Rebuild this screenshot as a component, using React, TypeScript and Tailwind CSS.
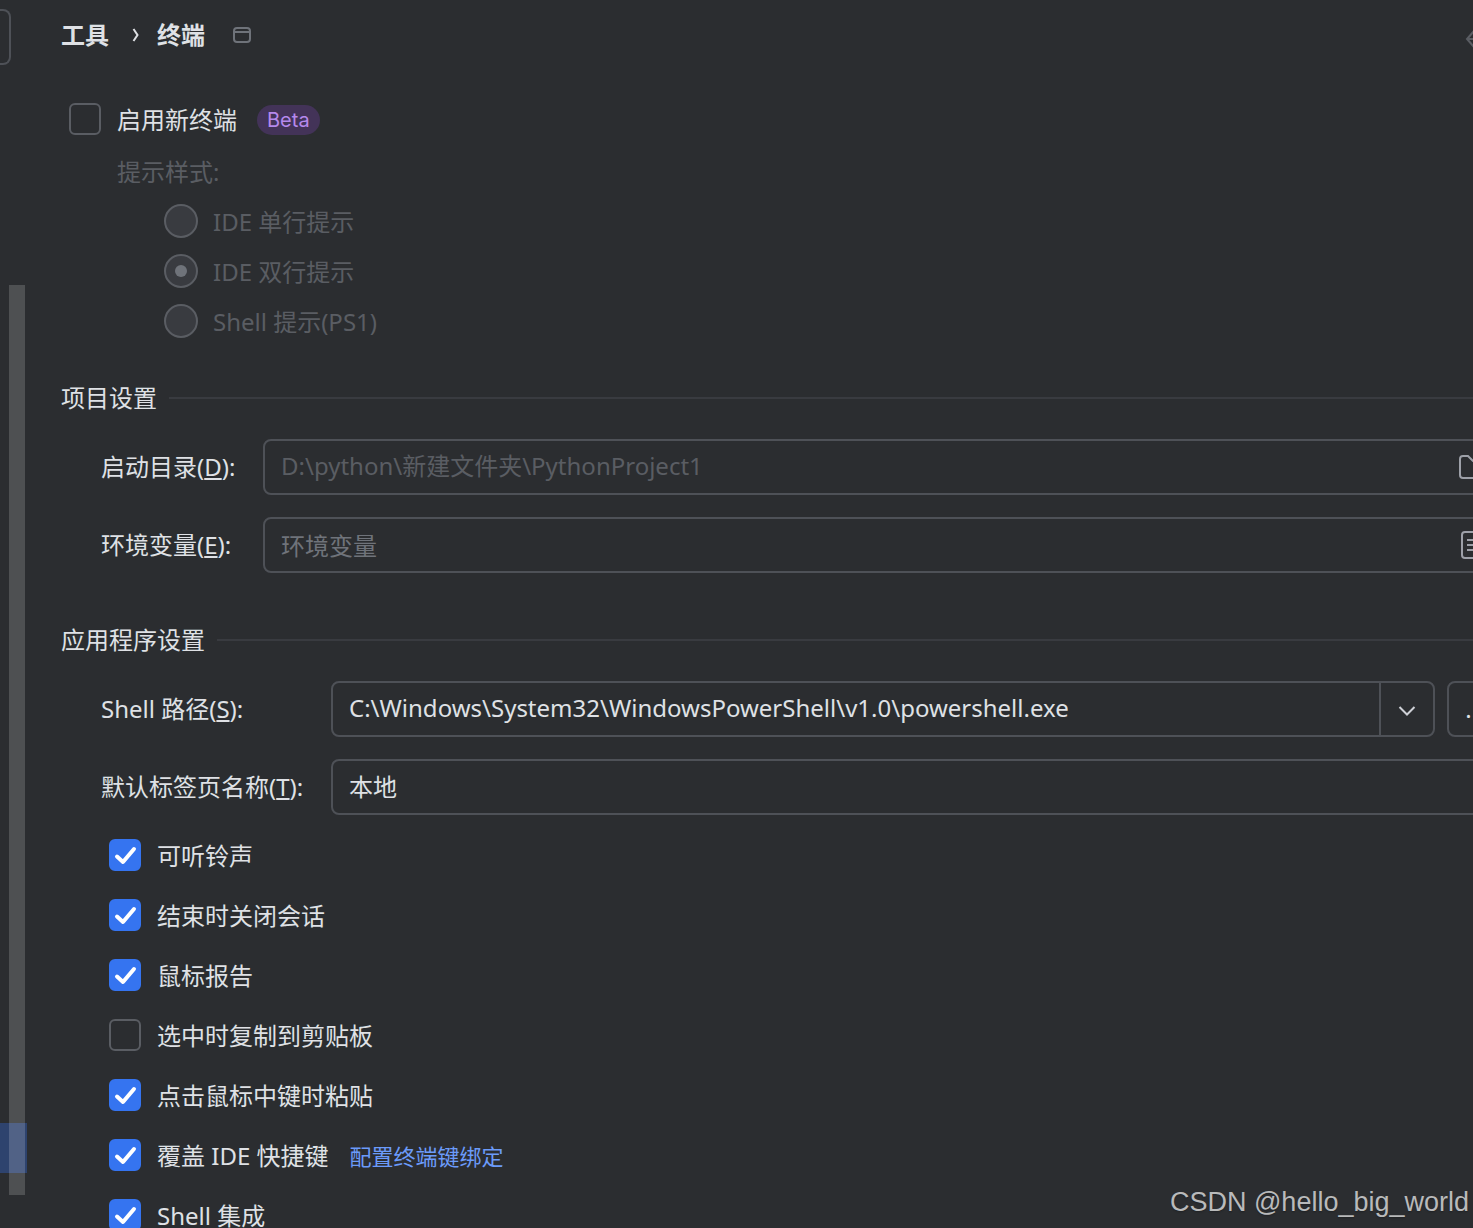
import { useState, type ReactNode } from 'react';

const uiFont = "font-['Noto_Sans','Noto_Sans_CJK_SC',sans-serif]";

function Checkbox({ id, label, defaultChecked = false }: { id: string; label: string; defaultChecked?: boolean }) {
  return (
    <div className="flex items-center gap-4">
      <span className="grid size-8 shrink-0">
        <input
          id={id}
          type="checkbox"
          defaultChecked={defaultChecked}
          className="peer size-8 appearance-none rounded-md border-2 border-[#5a5d63] [grid-area:1/1] checked:border-[#3574f0] checked:bg-[#3574f0]"
        />
        <svg
          viewBox="0 0 32 32"
          fill="none"
          stroke="#fff"
          strokeWidth="4"
          strokeLinecap="round"
          strokeLinejoin="round"
          className="pointer-events-none invisible size-8 [grid-area:1/1] peer-checked:visible"
        >
          <path d="M8 17.5 L14 23 L25 10" />
        </svg>
      </span>
      <label htmlFor={id} className="pt-0.5 whitespace-nowrap">
        {label}
      </label>
    </div>
  );
}

function Radio({ id, label, defaultChecked = false }: { id: string; label: string; defaultChecked?: boolean }) {
  return (
    <div className="flex h-[50px] items-center gap-[15px]">
      <span className="grid size-[34px] shrink-0 place-items-center">
        <input
          id={id}
          type="radio"
          name="prompt-style"
          defaultChecked={defaultChecked}
          disabled
          className="peer size-[34px] appearance-none rounded-full border-2 border-[#5a5d63] bg-[#393b40] [grid-area:1/1]"
        />
        <span className="pointer-events-none invisible size-3 rounded-full bg-[#6f737a] [grid-area:1/1] peer-checked:visible" />
      </span>
      <label htmlFor={id} className="pt-0.5">
        {label}
      </label>
    </div>
  );
}

function SectionTitle({ children }: { children: ReactNode }) {
  return (
    <div className="flex h-8 items-center gap-3">
      <h2>{children}</h2>
      <div className="h-0.5 flex-1 bg-[#393b40]" />
    </div>
  );
}

function FieldLabel({ htmlFor, text, mnemonic }: { htmlFor: string; text: string; mnemonic: string }) {
  return (
    <label htmlFor={htmlFor} className="whitespace-nowrap">
      {text}(<span className="underline decoration-2 underline-offset-2">{mnemonic}</span>):
    </label>
  );
}

const fieldBox = 'flex h-14 items-center rounded-lg border-2 border-[#4e5157]';
const fieldInput = 'h-full min-w-0 flex-1 bg-transparent px-4 outline-none';

const options = [
  { id: 'bell', label: '可听铃声', checked: true },
  { id: 'close', label: '结束时关闭会话', checked: true },
  { id: 'mouse', label: '鼠标报告', checked: true },
  { id: 'copy', label: '选中时复制到剪贴板', checked: false },
  { id: 'paste', label: '点击鼠标中键时粘贴', checked: true },
  { id: 'override', label: '覆盖 IDE 快捷键', checked: true, link: '配置终端键绑定' },
  { id: 'integration', label: 'Shell 集成', checked: true },
];

export default function App() {
  const [shell, setShell] = useState('C:\\Windows\\System32\\WindowsPowerShell\\v1.0\\powershell.exe');

  return (
    <div className={`relative flex h-screen overflow-hidden bg-[#2b2d30] text-2xl text-[#dfe1e5] ${uiFont}`}>
      <aside className="relative w-7 shrink-0">
        <div className="mt-[9px] h-14 w-[11px] rounded-r-lg border-2 border-l-0 border-[#4e5157]" />
        <div className="absolute top-[1123px] left-0 h-[50px] w-[27px] bg-[#2e436e]" />
        <div className="absolute top-[285px] left-[9px] h-[910px] w-4 bg-white/17" />
      </aside>

      <main className="min-w-0 flex-1 pl-[33px]">
        <div className="-mr-[30px] flex flex-col">
          <header className="flex h-[70px] items-center">
            <nav className="flex items-center font-bold">
              <span>工具</span>
              <svg viewBox="0 0 48 32" fill="none" stroke="#dfe1e5" strokeWidth="2" className="h-8 w-12">
                <path d="M24.5 10 L28.5 16 L24.5 22" />
              </svg>
              <h1>终端</h1>
            </nav>
            <svg viewBox="0 0 20 20" fill="none" stroke="#6f737a" strokeWidth="2" className="ml-[27px] size-5">
              <rect x="2" y="3" width="16" height="14" rx="3" />
              <path d="M2 7 H18" />
            </svg>
            <button type="button" aria-label="后退" className="mt-2 mr-1.5 ml-auto">
              <svg viewBox="0 0 32 32" fill="none" stroke="#5a5d63" strokeWidth="2" className="size-8">
                <path d="M9 8 L2 16 L9 24 M2 16 H28" />
              </svg>
            </button>
          </header>

          <section className="mt-8">
            <div className="flex items-center gap-5 pl-2">
              <Checkbox id="new-terminal" label="启用新终端" />
              <span className="mt-0.5 rounded-full bg-[#433358] px-2.5 font-['Inter',sans-serif] text-xl leading-[30px] text-[#b589ec]">
                Beta
              </span>
            </div>
            <fieldset className="pl-14 text-[#5a5d63]">
              <legend className="h-14 pt-5">提示样式:</legend>
              <div className="mt-1 pl-[47px]">
                <Radio id="single" label="IDE 单行提示" />
                <Radio id="double" label="IDE 双行提示" defaultChecked />
                <Radio id="ps1" label="Shell 提示(PS1)" />
              </div>
            </fieldset>
          </section>

          <section className="mt-9">
            <SectionTitle>项目设置</SectionTitle>
            <div className="mt-[25px] grid grid-cols-[162px_1fr] items-center gap-y-[22px] pl-10">
              <FieldLabel htmlFor="dir" text="启动目录" mnemonic="D" />
              <div className={fieldBox}>
                <input
                  id="dir"
                  placeholder="D:\python\新建文件夹\PythonProject1"
                  className={`${fieldInput} pb-1 placeholder:text-[#5a5d63]`}
                />
                <button type="button" aria-label="浏览" className="mr-[11px]">
                  <svg viewBox="0 0 32 32" fill="none" stroke="#9da0a8" strokeWidth="2" className="size-8">
                    <path d="M5 5 H10 L15 10 H27 Q29 10 29 12 V24 Q29 27 26 27 H5 Q2 27 2 24 V8 Q2 5 5 5 Z" />
                  </svg>
                </button>
              </div>
              <FieldLabel htmlFor="env" text="环境变量" mnemonic="E" />
              <div className={fieldBox}>
                <input id="env" placeholder="环境变量" className={`${fieldInput} placeholder:text-[#6f737a]`} />
                <button type="button" aria-label="编辑环境变量" className="mr-[11px]">
                  <svg viewBox="0 0 32 32" fill="none" stroke="#9da0a8" strokeWidth="2" className="size-8">
                    <rect x="4" y="3" width="24" height="26" rx="3" />
                    <path d="M9 11 H23 M9 16 H23 M9 21 H23" />
                  </svg>
                </button>
              </div>
            </div>
          </section>

          <section className="mt-[51px]">
            <SectionTitle>应用程序设置</SectionTitle>
            <div className="mt-[25px] grid grid-cols-[230px_1fr] items-center gap-y-[22px] pl-10">
              <FieldLabel htmlFor="shell" text="Shell 路径" mnemonic="S" />
              <div className="flex gap-3">
                <div className={`${fieldBox} min-w-0 flex-1`}>
                  <input
                    id="shell"
                    value={shell}
                    onChange={(e) => setShell(e.target.value)}
                    className={`${fieldInput} pb-1`}
                  />
                  <button
                    type="button"
                    aria-label="显示路径列表"
                    className="flex h-full w-[54px] items-center justify-center border-l-2 border-[#4e5157]"
                  >
                    <svg viewBox="0 0 20 20" fill="none" stroke="#ced0d6" strokeWidth="2" className="size-5">
                      <path d="M2.5 8 L10 15.5 L17.5 8" />
                    </svg>
                  </button>
                </div>
                <button type="button" className="h-14 w-14 rounded-lg border-2 border-[#4e5157]">
                  ...
                </button>
              </div>
              <FieldLabel htmlFor="tab" text="默认标签页名称" mnemonic="T" />
              <div className={fieldBox}>
                <input id="tab" defaultValue="本地" className={`${fieldInput} pb-1`} />
              </div>
            </div>
            <ul className="mt-2.5 pl-12">
              {options.map((o) => (
                <li key={o.id} className="flex h-[60px] items-center gap-[21px]">
                  <Checkbox id={o.id} label={o.label} defaultChecked={o.checked} />
                  {o.link && (
                    <a href="#keymap" className="pt-1 text-[22px] text-[#6b9bfa]">
                      {o.link}
                    </a>
                  )}
                </li>
              ))}
            </ul>
          </section>
        </div>
      </main>

      <div className="pointer-events-none absolute right-1 bottom-2 font-['Liberation_Sans',sans-serif] text-[27px] leading-9 text-[#b9babb] text-shadow-sm">
        CSDN @hello_big_world
      </div>
    </div>
  );
}
